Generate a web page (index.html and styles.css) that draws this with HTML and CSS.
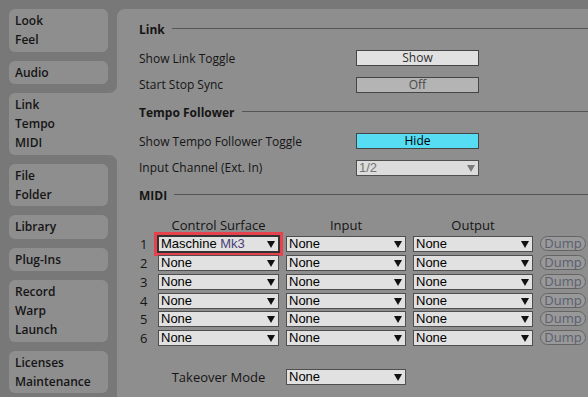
FILE: index.html
```html
<!DOCTYPE html>
<html>
<head>
<meta charset="utf-8">
<link rel="stylesheet" href="styles.css">
</head>
<body>
<div class="app">
  <nav class="sidebar">
    <div class="tab">Look<br>Feel</div>
    <div class="tab">Audio</div>
    <div class="tab active">Link<br>Tempo<br>MIDI</div>
    <div class="tab">File<br>Folder</div>
    <div class="tab">Library</div>
    <div class="tab">Plug-Ins</div>
    <div class="tab">Record<br>Warp<br>Launch</div>
    <div class="tab">Licenses<br>Maintenance</div>
  </nav>
  <main class="panel">
    <div class="sec-head">Link</div>
    <div class="sec-body">
      <div class="row"><span class="label">Show Link Toggle</span><span class="btn light">Show</span></div>
      <div class="row"><span class="label">Start Stop Sync</span><span class="btn dim">Off</span></div>
    </div>
    <div class="sec-head">Tempo Follower</div>
    <div class="sec-body">
      <div class="row"><span class="label">Show Tempo Follower Toggle</span><span class="btn cyan">Hide</span></div>
      <div class="row"><span class="label">Input Channel (Ext. In)</span><span class="dd wide disabled">1/2</span></div>
    </div>
    <div class="sec-head">MIDI</div>
    <div class="midi-grid cols">
      <span></span><span class="colhead">Control Surface</span><span class="colhead">Input</span><span class="colhead">Output</span><span></span>
    </div>
    <div class="midi-grid rows">
      <span class="num">1</span><span class="dd focus">Maschine <span class="mk">Mk3</span></span><span class="dd">None</span><span class="dd">None</span><span class="dump">Dump</span>
      <span class="num">2</span><span class="dd">None</span><span class="dd">None</span><span class="dd">None</span><span class="dump">Dump</span>
      <span class="num">3</span><span class="dd">None</span><span class="dd">None</span><span class="dd">None</span><span class="dump">Dump</span>
      <span class="num">4</span><span class="dd">None</span><span class="dd">None</span><span class="dd">None</span><span class="dump">Dump</span>
      <span class="num">5</span><span class="dd">None</span><span class="dd">None</span><span class="dd">None</span><span class="dump">Dump</span>
      <span class="num">6</span><span class="dd">None</span><span class="dd">None</span><span class="dd">None</span><span class="dump">Dump</span>
    </div>
    <div class="midi-grid takeover">
      <span></span><span class="colhead">Takeover Mode</span><span class="dd">None</span>
    </div>
  </main>
</div>
</body>
</html>
```
FILE: styles.css
```css
html, body {
  margin: 0;
  padding: 0;
}
body {
  width: 588px;
  height: 397px;
  overflow: hidden;
  background: #787878;
  font-family: "Open Sans", "Liberation Sans", sans-serif;
  color: #151515;
}
.app {
  display: flex;
  height: 397px;
}
.sidebar {
  width: 117px;
  box-sizing: border-box;
  padding: 9px 0 0 9px;
  display: flex;
  flex-direction: column;
  gap: 9px;
  flex: none;
}
.tab {
  margin-right: 9px;
  background: #8e8e8e;
  border-radius: 6px;
  padding: 2.25px 0 2.25px 6px;
  font-size: 12px;
  font-weight: 600;
  line-height: 19px;
  color: #151515;
}
.tab.active {
  margin-right: 0;
  border-radius: 6px 0 0 6px;
  position: relative;
}
.tab.active::before,
.tab.active::after {
  content: "";
  position: absolute;
  right: 0;
  width: 8px;
  height: 8px;
}
.tab.active::before {
  top: -8px;
  background: radial-gradient(circle at top left, transparent 7.5px, #8e8e8e 8.5px);
}
.tab.active::after {
  bottom: -8px;
  background: radial-gradient(circle at bottom left, transparent 7.5px, #8e8e8e 8.5px);
}
.panel {
  flex: 1;
  margin-top: 9px;
  background: #8e8e8e;
  border-top-left-radius: 8px;
  padding: 6px 0 0 22px;
  font-size: 12px;
}
.sec-head {
  height: 28px;
  display: flex;
  align-items: center;
  font-weight: 700;
}
.sec-head::after {
  content: "";
  flex: 1;
  height: 1px;
  background: #555;
  margin-left: 7px;
  margin-top: -1px;
}
.sec-body {
  margin-top: 2px;
}
.row {
  height: 26.5px;
  display: flex;
  align-items: center;
}
.label {
  width: 217px;
  flex: none;
}
.btn {
  width: 123px;
  height: 16px;
  box-sizing: border-box;
  border: 1px solid #454545;
  text-align: center;
  line-height: 14px;
  font-size: 12px;
}
.btn.light {
  background: #e1e1e1;
  color: #2e2e2e;
}
.btn.dim {
  background: #b4b4b4;
  color: #4a4a4a;
}
.btn.cyan {
  background: #56dcf3;
  color: #000;
}
.dd {
  display: block;
  position: relative;
  height: 16px;
  box-sizing: border-box;
  border: 1px solid #4e4e4e;
  background: #e1e1e1;
  font-family: "Liberation Sans", Arial, sans-serif;
  font-size: 13px;
  line-height: 14px;
  padding-left: 2px;
  color: #000;
  white-space: nowrap;
}
.dd::after {
  content: "";
  position: absolute;
  right: 3px;
  top: 4px;
  border-left: 4px solid transparent;
  border-right: 4px solid transparent;
  border-top: 7px solid #111;
}
.dd.wide {
  width: 123px;
}
.dd.disabled {
  background: #dcdcdc;
  color: #747474;
}
.dd.disabled::after {
  border-top-color: #7a7a7a;
}
.dd.focus {
  box-shadow: 0 0 0 1px #333;
  border-color: #333;
  outline: 3px solid #e5424d;
  outline-offset: 1px;
}
.mk {
  color: #4b3d78;
}
.midi-grid {
  display: grid;
  grid-template-columns: 12px 121px 120px 120px 46px;
  column-gap: 7px;
  align-items: center;
}
.cols {
  margin-top: 6px;
}
.colhead {
  text-align: center;
  height: 20px;
  line-height: 20px;
  font-size: 13px;
  white-space: nowrap;
}
.rows {
  grid-auto-rows: 18.75px;
}
.num {
  padding-left: 1px;
  font-size: 13px;
}
.dump {
  height: 15px;
  box-sizing: border-box;
  border: 1px solid #646464;
  border-radius: 7.5px;
  background: #999;
  color: #596070;
  text-align: center;
  line-height: 13px;
  font-size: 13px;
  margin-top: -1px;
}
.takeover {
  margin-top: 20px;
  grid-auto-rows: 18.75px;
}
```
